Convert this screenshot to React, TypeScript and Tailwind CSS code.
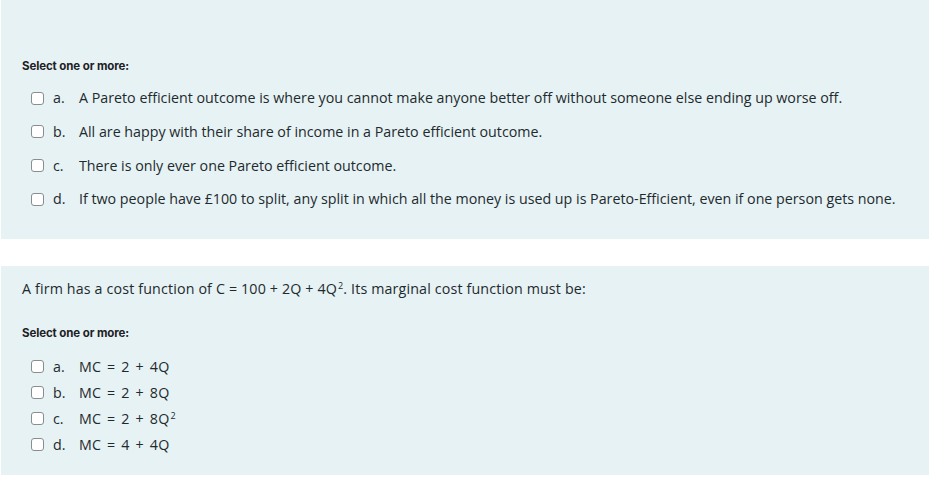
import type { ReactNode } from 'react';

type Option = { letter: string; text: ReactNode };

const Sq = () => <sup className="text-[9px] relative -top-[5px] ml-[1px]">2</sup>;

const q1: Option[] = [
    { letter: 'a.', text: 'A Pareto efficient outcome is where you cannot make anyone better off without someone else ending up worse off.' },
    { letter: 'b.', text: 'All are happy with their share of income in a Pareto efficient outcome.' },
    { letter: 'c.', text: 'There is only ever one Pareto efficient outcome.' },
    { letter: 'd.', text: 'If two people have £100 to split, any split in which all the money is used up is Pareto-Efficient, even if one person gets none.' },
];

const q2: Option[] = [
    { letter: 'a.', text: 'MC = 2 + 4Q' },
    { letter: 'b.', text: 'MC = 2 + 8Q' },
    { letter: 'c.', text: <>MC = 2 + 8Q<Sq /></> },
    { letter: 'd.', text: 'MC = 4 + 4Q' },
];

const Prompt = () => (
    <div className="text-[11.5px] font-bold text-[#1d2125] font-['Inter',sans-serif] tracking-[-0.1px]">
        Select one or more:
    </div>
);

const OptionRow = ({ opt, h, wide }: { opt: Option; h: string; wide?: boolean }) => (
    <div className={`flex items-center ${h}`}>
        <span className="ml-[9px] w-[13px] h-[13px] rounded-[3px] border border-[#8a8d90] bg-white shrink-0" />
        <span className="ml-[9px] w-[26px]">{opt.letter}</span>
        <span className={wide ? '[word-spacing:2px] tracking-[0.2px]' : ''}>{opt.text}</span>
    </div>
);

export default function App() {
    return (
        <div className="w-[929px] h-[478px] bg-white font-['Open_Sans','Noto_Sans',sans-serif] text-[14.25px] text-[#1d2a2e]">
            {/* Question 1 */}
            <div className="ml-[1px] h-[239px] bg-[#e7f2f4] px-[21px] pt-[58px]">
                <Prompt />
                <div className="mt-[6px] flex flex-col">
                    {q1.map(o => <OptionRow key={o.letter} opt={o} h="h-[33.7px]" />)}
                </div>
            </div>

            {/* Question 2 */}
            <div className="ml-[1px] mt-[27px] h-[209px] bg-[#e7f2f4] px-[21px] pt-[12px]">
                <div className="h-[22px] flex items-center tracking-[0.15px]">
                    <span>A firm has a cost function of C = 100 + 2Q + 4Q<Sq />. Its marginal cost function must be:</span>
                </div>
                <div className="mt-[25px]">
                    <Prompt />
                </div>
                <div className="mt-[11px] flex flex-col">
                    {q2.map(o => <OptionRow key={o.letter} opt={o} h="h-[26px]" wide />)}
                </div>
            </div>
        </div>
    );
}
